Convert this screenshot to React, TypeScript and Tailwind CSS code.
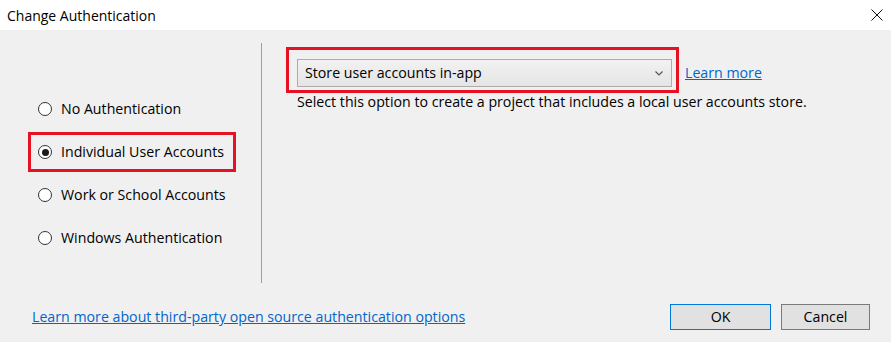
import { useState } from "react";

const OPTIONS = [
  "No Authentication",
  "Individual User Accounts",
  "Work or School Accounts",
  "Windows Authentication",
];

const Radio = ({ checked }: { checked: boolean }) => (
  <span className="flex h-[14px] w-[14px] shrink-0 items-center justify-center rounded-full border border-[#333333] bg-white">
    {checked && <span className="h-[7px] w-[7px] rounded-full bg-[#1a1a1a]" />}
  </span>
);

const App = () => {
  const [selected, setSelected] = useState<number>(1);

  return (
    <div
      className="flex h-[342px] w-[891px] flex-col bg-[#f0f0f0] text-[14.2px] text-black"
      style={{ fontFamily: '"Open Sans", "Noto Sans", sans-serif' }}
    >
      <div className="flex h-[30px] items-center justify-between bg-white pl-[7px] pr-[8px]">
        <span className="text-[14px]">Change Authentication</span>
        <svg width="12" height="12" viewBox="0 0 12 12">
          <path d="M0.5 0.5 L11.5 11.5 M11.5 0.5 L0.5 11.5" stroke="#111" strokeWidth="1" />
        </svg>
      </div>

      <div className="flex pt-[13px]">
        <div className="w-[261px] pl-[28px] pt-[46px]">
          <ul className="flex flex-col gap-[3px]">
            {OPTIONS.map((label, i) => (
              <li key={label}>
                <button
                  onClick={() => setSelected(i)}
                  className={`flex h-[40px] w-[208px] items-center gap-[9px] border-[3px] pl-[7px] ${
                    i === 1 ? "border-[#e81123]" : "border-transparent"
                  }`}
                >
                  <Radio checked={selected === i} />
                  <span className="whitespace-nowrap">{label}</span>
                </button>
              </li>
            ))}
          </ul>
        </div>

        <div className="h-[240px] w-px bg-[#a0a0a0]" />

        <div className="pl-[24px] pt-[4px]">
          <div className="flex items-center">
            <div className="border-[3px] border-[#e81123] pb-[3px] pl-[8px] pr-[4px] pt-[9px]">
              <div className="flex h-[28px] w-[375px] items-center justify-between border border-[#acacac] bg-gradient-to-b from-[#f2f2f2] to-[#e5e5e5] pl-[7px] pr-[8px]">
                <span>Store user accounts in-app</span>
                <svg width="8" height="5" viewBox="0 0 8 5">
                  <path d="M0.5 0.5 L4 4 L7.5 0.5" stroke="#555" strokeWidth="1.2" fill="none" />
                </svg>
              </div>
            </div>
            <a className="ml-[6px] mt-[6px] text-[#0066cc] underline">Learn more</a>
          </div>
          <p className="pl-[11px] leading-[18px]">
            Select this option to create a project that includes a local user accounts store.
          </p>
        </div>
      </div>

      <div className="mt-[21px] flex items-center justify-between pl-[32px] pr-[21px]">
        <a className="text-[#0066cc] underline">
          Learn more about third-party open source authentication options
        </a>
        <div className="flex gap-[10px]">
          <button className="h-[26px] w-[101px] border border-[#0078d7] bg-[#e1e1e1]">OK</button>
          <button className="h-[26px] w-[89px] border border-[#7a7a7a] bg-[#e1e1e1]">Cancel</button>
        </div>
      </div>
    </div>
  );
};

export default App;
